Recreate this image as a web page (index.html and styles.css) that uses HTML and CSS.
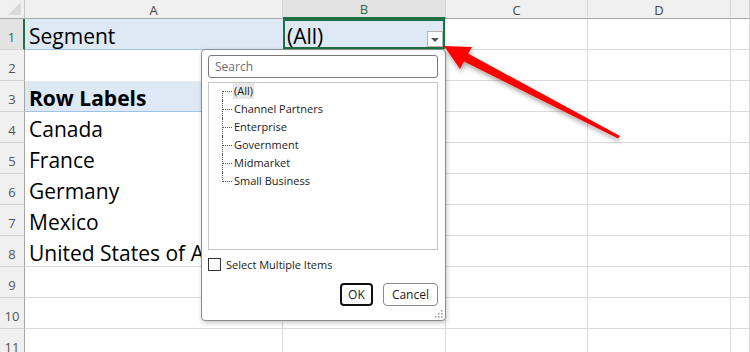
FILE: index.html
```html
<!DOCTYPE html>
<html>
<head>
    <meta charset="UTF-8">
    <title>Segment filter</title>
    <link rel="stylesheet" href="styles.css">
</head>
<body>
    <div class="sheet">
        <!-- column headers -->
        <div class="corner"><span class="corner-tri"></span></div>
        <div class="col-head">A</div>
        <div class="col-head active">B</div>
        <div class="col-head">C</div>
        <div class="col-head">D</div>
        <div class="col-head"></div>

        <!-- row 1 -->
        <div class="row-head active">1</div>
        <div class="cell pivot-head line-blue">Segment</div>
        <div class="cell pivot-head selected">
            <span>(All)</span>
            <span class="drop-btn"><span class="drop-tri"></span></span>
        </div>
        <div class="cell"></div>
        <div class="cell"></div>
        <div class="cell"></div>

        <!-- row 2 -->
        <div class="row-head">2</div>
        <div class="cell bare"></div>
        <div class="cell bare"></div>
        <div class="cell"></div>
        <div class="cell"></div>
        <div class="cell"></div>

        <!-- row 3 -->
        <div class="row-head">3</div>
        <div class="cell pivot-head line-blue bold">Row Labels</div>
        <div class="cell pivot-head line-blue"></div>
        <div class="cell"></div>
        <div class="cell"></div>
        <div class="cell"></div>

        <!-- rows 4-8 -->
        <div class="row-head">4</div>
        <div class="cell bare">Canada</div>
        <div class="cell bare"></div>
        <div class="cell"></div>
        <div class="cell"></div>
        <div class="cell"></div>

        <div class="row-head">5</div>
        <div class="cell bare">France</div>
        <div class="cell bare"></div>
        <div class="cell"></div>
        <div class="cell"></div>
        <div class="cell"></div>

        <div class="row-head">6</div>
        <div class="cell bare">Germany</div>
        <div class="cell bare"></div>
        <div class="cell"></div>
        <div class="cell"></div>
        <div class="cell"></div>

        <div class="row-head">7</div>
        <div class="cell bare">Mexico</div>
        <div class="cell bare"></div>
        <div class="cell"></div>
        <div class="cell"></div>
        <div class="cell"></div>

        <div class="row-head">8</div>
        <div class="cell bare line-grey">United States of America</div>
        <div class="cell bare line-grey"></div>
        <div class="cell"></div>
        <div class="cell"></div>
        <div class="cell"></div>

        <!-- rows 9-11 -->
        <div class="row-head">9</div>
        <div class="cell"></div>
        <div class="cell"></div>
        <div class="cell"></div>
        <div class="cell"></div>
        <div class="cell"></div>

        <div class="row-head">10</div>
        <div class="cell"></div>
        <div class="cell"></div>
        <div class="cell"></div>
        <div class="cell"></div>
        <div class="cell"></div>

        <div class="row-head">11</div>
        <div class="cell"></div>
        <div class="cell"></div>
        <div class="cell"></div>
        <div class="cell"></div>
        <div class="cell"></div>
    </div>

    <!-- filter dropdown for the Segment field -->
    <div class="filter-box">
        <div class="search">Search</div>
        <div class="item-list">
            <ul class="tree">
                <li><span class="item current">(All)</span></li>
                <li><span class="item">Channel Partners</span></li>
                <li><span class="item">Enterprise</span></li>
                <li><span class="item">Government</span></li>
                <li><span class="item">Midmarket</span></li>
                <li><span class="item">Small Business</span></li>
            </ul>
        </div>
        <div class="multi">
            <span class="check"></span>
            <span>Select Multiple Items</span>
        </div>
        <div class="buttons">
            <span class="btn btn-ok">OK</span>
            <span class="btn">Cancel</span>
        </div>
        <svg class="grip" width="8" height="8" viewBox="0 0 8 8">
            <rect x="6" y="0" width="1.5" height="1.5" fill="#9a9a9a"/>
            <rect x="3" y="3" width="1.5" height="1.5" fill="#9a9a9a"/>
            <rect x="6" y="3" width="1.5" height="1.5" fill="#9a9a9a"/>
            <rect x="0" y="6" width="1.5" height="1.5" fill="#9a9a9a"/>
            <rect x="3" y="6" width="1.5" height="1.5" fill="#9a9a9a"/>
            <rect x="6" y="6" width="1.5" height="1.5" fill="#9a9a9a"/>
        </svg>
    </div>

    <!-- red callout arrow -->
    <svg class="callout" width="750" height="352" viewBox="0 0 750 352">
        <defs>
            <filter id="shade" x="-20%" y="-20%" width="140%" height="140%">
                <feDropShadow dx="1" dy="3" stdDeviation="2.5" flood-color="#000" flood-opacity="0.35"/>
            </filter>
        </defs>
        <polygon points="444,46 472,47 468,53.5 620,136 618,138.5 464,61.5 460,69" fill="#ff0000" filter="url(#shade)"/>
    </svg>
</body>
</html>
```

FILE: styles.css
```css
body {
    margin: 0;
    width: 750px;
    height: 352px;
    overflow: hidden;
    background: #fff;
    font-family: "Open Sans", "Noto Sans", sans-serif;
    position: relative;
}

.sheet {
    display: grid;
    grid-template-columns: 25px 258px 163px 142px 143px 1fr;
    grid-template-rows: 19px repeat(11, 31px);
}

.sheet > div {
    box-sizing: border-box;
}

.corner {
    background: #f0f0f0;
    border-right: 1px solid #c8c8c8;
    border-bottom: 1px solid #a6a6a6;
    position: relative;
}

.corner-tri {
    position: absolute;
    right: 3px;
    bottom: 3px;
    width: 0;
    height: 0;
    border-left: 13px solid transparent;
    border-bottom: 13px solid #dadada;
}

.col-head {
    background: #f0f0f0;
    border-right: 1px solid #d4d4d4;
    border-bottom: 1px solid #a6a6a6;
    color: #444;
    font-size: 13px;
    display: flex;
    justify-content: center;
    align-items: center;
    padding-top: 1px;
}

.col-head.active {
    background: #e3e3e3;
    color: #1e7145;
    border-bottom: 2px solid #1e7145;
}

.row-head {
    background: #f0f0f0;
    border-right: 1px solid #a6a6a6;
    border-bottom: 1px solid #d4d4d4;
    color: #555;
    font-size: 13px;
    display: flex;
    justify-content: center;
    align-items: flex-end;
    padding-bottom: 3px;
}

.row-head.active {
    background: #e3e3e3;
    color: #1e7145;
    border-right: 2px solid #1e7145;
}

.cell {
    border-right: 1px solid #dadada;
    border-bottom: 1px solid #dadada;
    font-size: 21px;
    color: #000;
    display: flex;
    align-items: flex-end;
    padding: 0 0 0 4px;
    line-height: 25px;
    white-space: nowrap;
    overflow: hidden;
}

.cell.bare {
    border-color: transparent;
}

.cell.pivot-head {
    background: #dde9f5;
    border-right-color: transparent;
}

.cell.line-blue {
    border-bottom: 1px solid #9dc3e6;
}

.cell.line-grey {
    border-bottom-color: #dadada;
}

.cell.bold {
    font-weight: 700;
}

.cell.selected {
    box-shadow: inset 0 0 0 2px #1e7145;
    justify-content: space-between;
    align-items: stretch;
    padding: 0 2px 0 4px;
}

.cell.selected span:first-child {
    display: flex;
    align-items: flex-end;
}

.drop-btn {
    align-self: flex-end;
    margin-bottom: 2px;
    width: 16px;
    height: 16px;
    box-sizing: border-box;
    background: #fff;
    border: 1px solid #b4b4b4;
    display: flex;
    justify-content: center;
    align-items: center;
}

.drop-tri {
    width: 0;
    height: 0;
    border-left: 4px solid transparent;
    border-right: 4px solid transparent;
    border-top: 4px solid #555;
    margin-top: 1px;
}

/* filter dropdown */
.filter-box {
    position: absolute;
    left: 201px;
    top: 49px;
    width: 245px;
    height: 272px;
    box-sizing: border-box;
    background: #fff;
    border: 1px solid #8c8c8c;
    border-radius: 4px;
    box-shadow: 1px 2px 5px rgba(0, 0, 0, 0.22);
    padding: 5px 7px 0 6px;
    font-size: 11px;
    color: #1b1b1b;
}

.search {
    height: 23px;
    box-sizing: border-box;
    border: 1px solid #7a7a7a;
    border-radius: 3px;
    color: #6e6e6e;
    padding-left: 6px;
    line-height: 21px;
    font-size: 12px;
}

.item-list {
    margin-top: 4px;
    height: 168px;
    box-sizing: border-box;
    border: 1px solid #c6c6c6;
    padding: 0 0 0 13px;
}

.tree {
    list-style: none;
    margin: -1px 0 0;
    padding: 0;
}

.tree li {
    height: 18px;
    display: flex;
    align-items: center;
    position: relative;
    padding-left: 11px;
}

.tree li::before {
    content: "";
    position: absolute;
    left: 0;
    top: 9px;
    width: 10px;
    border-top: 1px dotted #555;
}

.tree li::after {
    content: "";
    position: absolute;
    left: 0;
    top: 0;
    height: 18px;
    border-left: 1px dotted #555;
}

.tree li:first-child::after {
    top: 9px;
    height: 9px;
}

.tree li:last-child::after {
    height: 10px;
}

.item {
    padding: 0 1px;
    line-height: 16px;
}

.item.current {
    background: #e8e8e8;
}

.multi {
    display: flex;
    align-items: center;
    gap: 5px;
    margin-top: 7px;
    height: 15px;
    line-height: 15px;
    font-size: 11px;
}

.check {
    width: 13px;
    height: 13px;
    box-sizing: border-box;
    border: 1px solid #333;
}

.buttons {
    display: flex;
    justify-content: flex-end;
    gap: 10px;
    margin-top: 11px;
}

.btn {
    height: 23px;
    box-sizing: border-box;
    border: 1px solid #8a8a8a;
    border-radius: 4px;
    padding: 0 8px;
    font-size: 12px;
    display: flex;
    align-items: center;
}

.btn-ok {
    border: 2px solid #111;
    width: 33px;
    justify-content: center;
    padding: 0;
}

.grip {
    position: absolute;
    right: 2px;
    bottom: 2px;
}

.callout {
    position: absolute;
    left: 0;
    top: 0;
    pointer-events: none;
}
```
